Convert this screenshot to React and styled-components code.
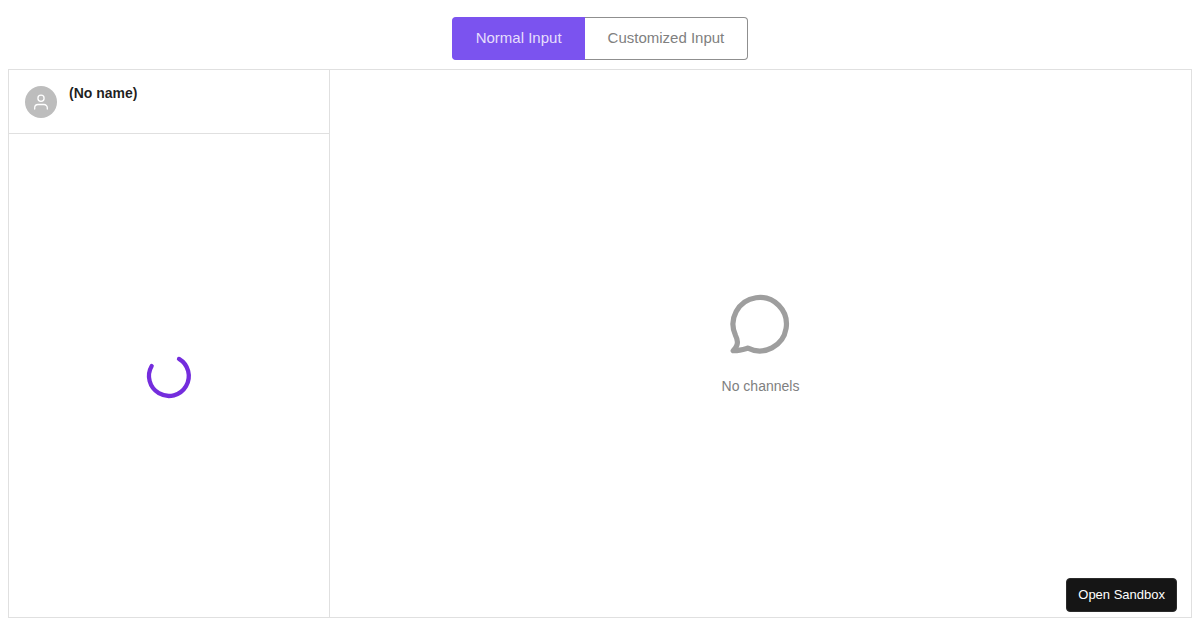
import React, { useState } from 'react';
import styled, { createGlobalStyle } from 'styled-components';

const GlobalStyle = createGlobalStyle`
    * {
        box-sizing: border-box;
    }

    body {
        margin: 0;
        background-color: #fff;
        font-family: "Liberation Sans", Arial, sans-serif;
    }
`;

const UserIcon = () => (
    <svg width="32" height="32" viewBox="0 0 32 32" fill="none" stroke="#fff" strokeWidth="1.3" strokeLinecap="round">
        <circle cx="16" cy="12.2" r="3.1" />
        <path d="M9.7 23v-1.2a3.3 3.3 0 0 1 3.3-3.3h6a3.3 3.3 0 0 1 3.3 3.3v1.2" />
    </svg>
);

const SpinnerIcon = () => (
    <svg width="48" height="48" viewBox="0 0 48 48" fill="none" stroke="#742ddd" strokeWidth="4.3" strokeLinecap="round">
        <path d="M6.7 14A19.9 19.9 0 1 0 34 6.9" />
    </svg>
);

const ChatIcon = () => (
    <svg width="64" height="64" viewBox="1.3 0 64 64" fill="none" stroke="#9e9e9e" strokeWidth="5.2" strokeLinejoin="round">
        <path d="M20.2 56.1A26.7 26.7 0 1 0 7.9 43.6C9.8 47.2 10.3 50 9.2 53.2C8.4 55.6 7.2 56.8 5.5 58.7C11 59 14.5 57.8 20.2 56.1Z" />
    </svg>
);

const App = () => {
    const [tab, setTab] = useState('normal');

    return (
        <Page>
            <GlobalStyle />
            <TabGroup>
                <TabButton type="button" $active={ tab === 'normal' } onClick={ () => setTab('normal') }>
                    Normal Input
                </TabButton>
                <TabButton type="button" $active={ tab === 'custom' } onClick={ () => setTab('custom') }>
                    Customized Input
                </TabButton>
            </TabGroup>
            <Chat>
                <Sidebar>
                    <Profile>
                        <Avatar><UserIcon /></Avatar>
                        <UserName>(No name)</UserName>
                    </Profile>
                    <ChannelList><SpinnerIcon /></ChannelList>
                </Sidebar>
                <Conversation>
                    <ChatIcon />
                    <Notice>No channels</Notice>
                </Conversation>
            </Chat>
            <SandboxButton type="button">Open Sandbox</SandboxButton>
        </Page>
    );
}

export default App;

const Page = styled.div`
    display: flex;
    flex-direction: column;
    gap: 9px;
    min-height: 100vh;
    padding: 17px 8px 12px;
`;

const TabGroup = styled.div`
    display: flex;
    justify-content: center;
`;

const TabButton = styled.button`
    padding: 11px 23px 13px;
    border: 1px solid ${props => props.$active ? '#7b53ef' : '#8f8f8f'};
    background-color: ${props => props.$active ? '#7b53ef' : '#fff'};
    color: ${props => props.$active ? '#e6dffc' : '#808080'};
    font-family: inherit;
    font-size: 15px;
    line-height: 17px;
    cursor: pointer;

    &:first-child {
        border-right: 0;
        border-radius: 4px 0 0 4px;
    }

    &:last-child {
        border-left: 0;
        border-radius: 0 4px 4px 0;
    }
`;

const Chat = styled.main`
    display: flex;
    flex: 1;
    border: 1px solid #e0e0e0;
`;

const Sidebar = styled.aside`
    display: flex;
    flex-direction: column;
    flex: 0 0 321px;
    border-right: 1px solid #e0e0e0;
`;

const Profile = styled.div`
    display: flex;
    gap: 12px;
    height: 64px;
    padding: 16px;
    border-bottom: 1px solid #e0e0e0;
`;

const Avatar = styled.div`
    width: 32px;
    height: 32px;
    border-radius: 50%;
    background-color: #bdbdbd;
`;

const UserName = styled.div`
    color: rgba(0, 0, 0, 0.88);
    font-size: 14px;
    font-weight: bold;
    line-height: 14px;
`;

const ChannelList = styled.div`
    display: flex;
    flex: 1;
    align-items: center;
    justify-content: center;
`;

const Conversation = styled.section`
    display: flex;
    flex: 1;
    flex-direction: column;
    align-items: center;
    justify-content: center;
    gap: 20px;
`;

const Notice = styled.div`
    color: #808080;
    font-size: 14px;
    line-height: 20px;
`;

const SandboxButton = styled.button`
    position: fixed;
    right: 23px;
    bottom: 18px;
    padding: 8px 11px;
    border: 1px solid #2b2b2b;
    border-radius: 4px;
    background-color: #151515;
    color: #fff;
    font-family: inherit;
    font-size: 13px;
    line-height: 16px;
    cursor: pointer;
`;
